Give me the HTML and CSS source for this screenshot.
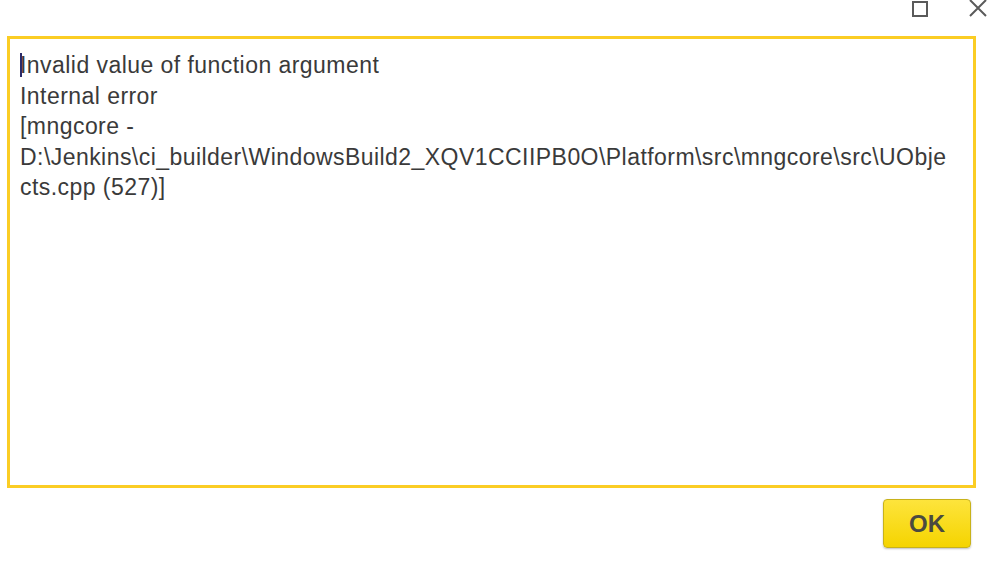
FILE: index.html
```html
<!DOCTYPE html>
<html>
<head>
<meta charset="utf-8">
<link rel="stylesheet" href="styles.css">
</head>
<body>
<div class="window">
  <div class="titlebar">
    <span class="btn-max"></span>
    <svg class="btn-close" width="20" height="18" viewBox="0 0 20 18"><path d="M2 0 L18 16 M18 0 L2 16" stroke="#5a5a5a" stroke-width="2" fill="none"/></svg>
  </div>
  <div class="content">
    <div class="message"><span class="caret"></span>Invalid value of function argument<br>Internal error<br>[mngcore -<br>D:\Jenkins\ci_builder\WindowsBuild2_XQV1CCIIPB0O\Platform\src\mngcore\src\UObje<br>cts.cpp (527)]</div>
    <div class="actions"><button class="ok">OK</button></div>
  </div>
</div>
</body>
</html>
```

FILE: styles.css
```css
html, body {
  margin: 0;
  padding: 0;
  background: #ffffff;
}
.window {
  width: 994px;
  height: 563px;
  overflow: hidden;
  font-family: "Liberation Sans", Arial, sans-serif;
}
.titlebar {
  height: 36px;
  display: flex;
  justify-content: flex-end;
  align-items: flex-start;
  gap: 40px;
  padding-right: 6px;
}
.btn-max {
  display: block;
  width: 12px;
  height: 12px;
  margin-top: 1px;
  border: 2px solid #5a5a5a;
  box-sizing: content-box;
}
.btn-close {
  display: block;
  margin-top: 0;
}
.content {
  padding: 0 18px 0 7px;
}
.message {
  box-sizing: border-box;
  width: 969px;
  height: 452px;
  border: 3px solid #fbcd24;
  padding: 11px 10px;
  font-size: 23px;
  letter-spacing: 0.45px;
  line-height: 30.5px;
  color: #3a3a3a;
  position: relative;
}
.caret {
  position: absolute;
  left: 10px;
  top: 14px;
  width: 2px;
  height: 24px;
  background: #2a2a6a;
}
.actions {
  display: flex;
  justify-content: flex-end;
  padding-top: 11px;
  padding-right: 5px;
}
.ok {
  width: 88px;
  height: 49px;
  border: 1px solid #c8b21a;
  border-radius: 4px;
  background: linear-gradient(#fde43c, #f5d400);
  box-shadow: 0 1px 2px rgba(0,0,0,0.25);
  font-family: "Liberation Sans", Arial, sans-serif;
  font-weight: bold;
  font-size: 24px;
  color: #4a4a40;
  padding: 0;
}
```
